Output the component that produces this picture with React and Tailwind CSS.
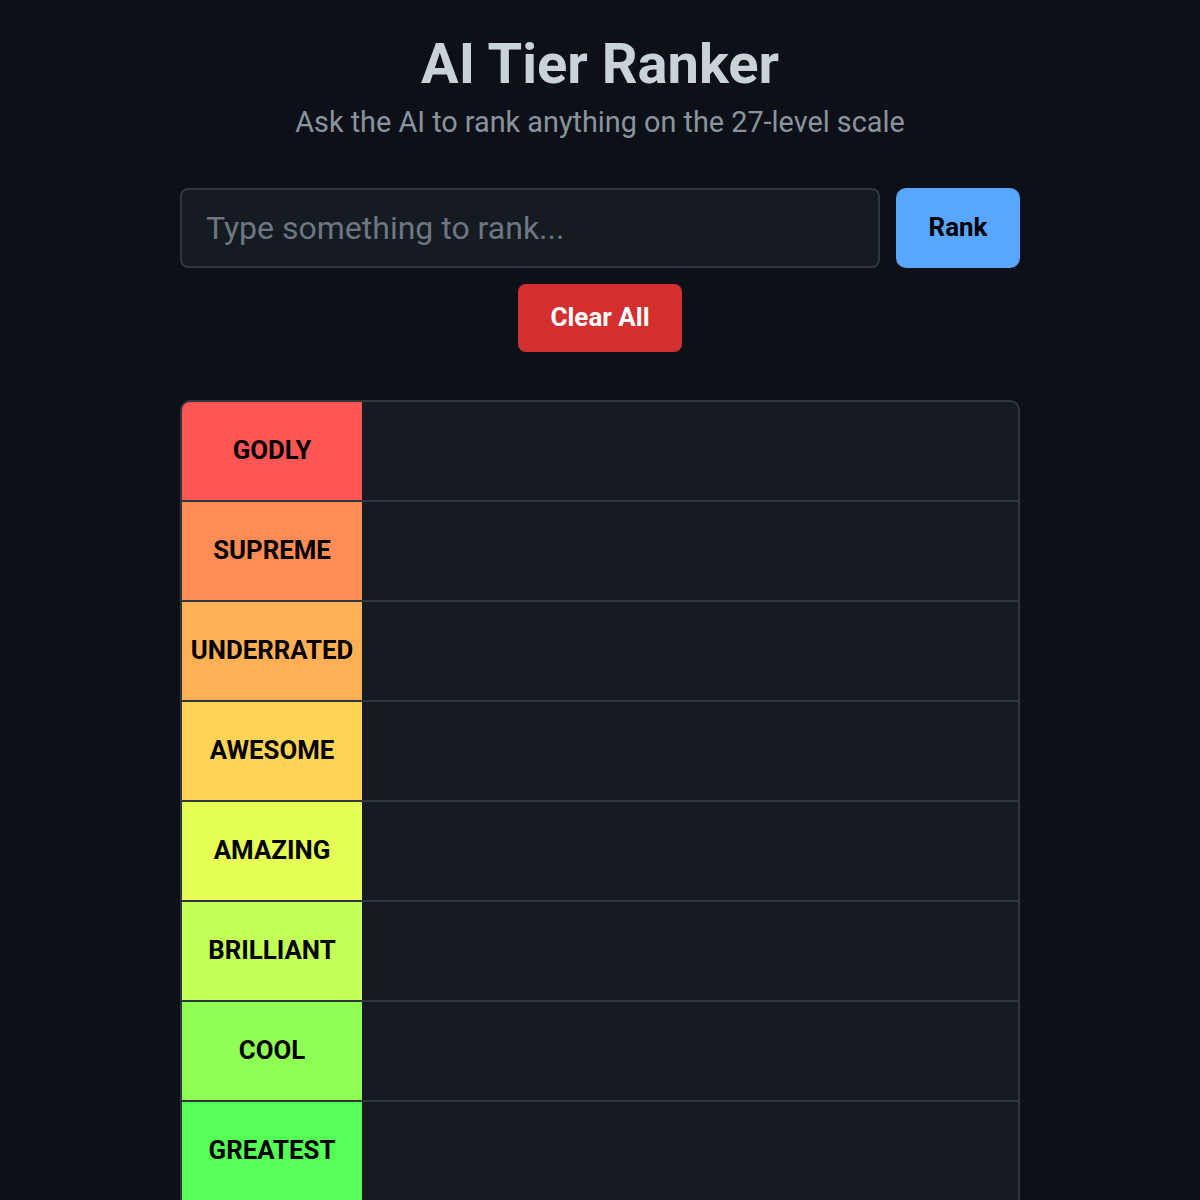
const TIERS = [
  { name: 'GODLY', color: 'bg-[#ff5555]' },
  { name: 'SUPREME', color: 'bg-[#ff8c55]' },
  { name: 'UNDERRATED', color: 'bg-[#ffb055]' },
  { name: 'AWESOME', color: 'bg-[#ffd455]' },
  { name: 'AMAZING', color: 'bg-[#e6ff55]' },
  { name: 'BRILLIANT', color: 'bg-[#c4ff55]' },
  { name: 'COOL', color: 'bg-[#8fff55]' },
  { name: 'GREATEST', color: 'bg-[#55ff55]' },
  { name: 'GREAT', color: 'bg-[#55ff8c]' },
];

export default function App() {
  return (
    <div
      className="min-h-screen bg-[#0d1117] text-[#c9d1d9]"
      style={{ fontFamily: 'Roboto, "Liberation Sans", sans-serif' }}
    >
      <div className="mx-auto w-[840px] pt-[31px]">
        <h1 className="text-center text-[56px] font-bold leading-[1.2]">AI Tier Ranker</h1>
        <p className="mt-[6px] text-center text-[28.8px] leading-[1.3] text-[#8b949e]">
          Ask the AI to rank anything on the 27-level scale
        </p>

        <div className="mt-[46px] flex gap-4">
          <input
            type="text"
            placeholder="Type something to rank..."
            className="h-[80px] flex-1 rounded-lg border-2 border-[#30363d] bg-[#161b22] px-[24px] text-[32px] text-[#c9d1d9] outline-none placeholder:text-[#6e7681]"
          />
          <button className="h-[80px] w-[124px] rounded-[10px] bg-[#58a6ff] text-[26px] font-bold text-black">
            Rank
          </button>
        </div>

        <div className="mt-4 flex justify-center">
          <button className="h-[68px] w-[164px] rounded-lg bg-[#d32f2f] text-[26px] font-bold text-white">
            Clear All
          </button>
        </div>

        <div className="mt-[48px] overflow-hidden rounded-[10px] border-2 border-[#30363d] bg-[#161b22]">
          {TIERS.map((t) => (
            <div key={t.name} className="flex h-[100px] border-b-2 border-[#30363d]">
              <div
                className={`flex w-[180px] shrink-0 items-center justify-center text-[25.8px] font-bold text-black ${t.color}`}
              >
                {t.name}
              </div>
              <div className="flex-1" />
            </div>
          ))}
        </div>
      </div>
    </div>
  );
}
